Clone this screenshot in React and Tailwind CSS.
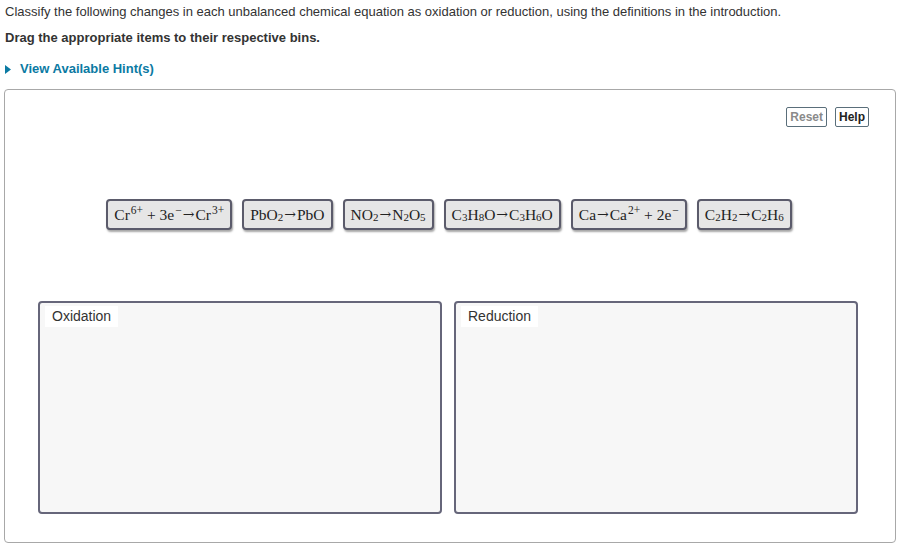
import React from "react";

const Chip = ({ children }) => (
  <div className="h-[31px] px-[6px] flex items-center rounded-[4px] border-2 border-[#5b5b6b] bg-[#e6e6e6] shadow-[1px_2px_2px_rgba(0,0,0,0.35)] text-[15.5px] text-[#222] whitespace-nowrap" style={{ fontFamily: '"Liberation Serif", "DejaVu Serif", serif' }}>
    {children}
  </div>
);

const Sup = ({ children }) => <sup className="text-[11.5px] top-[-0.35em] ml-[1px]">{children}</sup>;
const Sub = ({ children }) => <sub className="text-[11px]">{children}</sub>;
const Ar = () => <span className="mx-[1px] text-[14px]" style={{ fontFamily: '"DejaVu Serif", serif' }}>→</span>;

const Bin = ({ label }) => (
  <div className="w-[404px] h-[213px] rounded-[4px] border-2 border-[#66667a] bg-[#f7f7f7] pt-[1px] pl-[5px]">
    <div className="inline-block bg-white px-[7px] h-[21px] leading-[21px] text-[14px] text-[#333]">{label}</div>
  </div>
);

export default function App() {
  return (
    <div className="w-[897px] h-[544px] bg-white text-[#333]" style={{ fontFamily: '"Liberation Sans", Arial, sans-serif' }}>
      <div className="pl-[5px] pt-[4px] text-[13px] leading-[16px]">
        Classify the following changes in each unbalanced chemical equation as oxidation or reduction, using the definitions in the introduction.
      </div>
      <div className="pl-[5px] pt-[10px] text-[13px] leading-[16px] font-bold">
        Drag the appropriate items to their respective bins.
      </div>
      <div className="pl-[5px] pt-[15px] flex items-center text-[13px] leading-[16px] font-bold text-[#0b7aa3]">
        <svg width="6" height="9" viewBox="0 0 6 9" className="mr-[9px]"><polygon points="0,0 6,4.5 0,9" fill="#0b7aa3" /></svg>
        View Available Hint(s)
      </div>
      <div className="ml-[4px] mt-[12px] w-[892px] h-[454px] rounded-[4px] border border-[#a8a8a8] flex flex-col">
        <div className="flex justify-end gap-[8px] pr-[26px] pt-[17px]">
          <div className="h-[20px] px-[3px] border border-[#5a6e7a] rounded-[2px] text-[12px] leading-[18px] font-bold text-[#8a8a8a]">Reset</div>
          <div className="h-[20px] px-[3px] border border-[#5a6e7a] rounded-[2px] text-[12px] leading-[18px] font-bold text-[#222]">Help</div>
        </div>
        <div className="flex justify-center gap-[10px] mt-[72px] pr-[2px]">
          <Chip>Cr<Sup>6+</Sup>&nbsp;+ 3e<Sup>−</Sup><Ar />Cr<Sup>3+</Sup></Chip>
          <Chip>PbO<Sub>2</Sub><Ar />PbO</Chip>
          <Chip>NO<Sub>2</Sub><Ar />N<Sub>2</Sub>O<Sub>5</Sub></Chip>
          <Chip>C<Sub>3</Sub>H<Sub>8</Sub>O<Ar />C<Sub>3</Sub>H<Sub>6</Sub>O</Chip>
          <Chip>Ca<Ar />Ca<Sup>2+</Sup>&nbsp;+ 2e<Sup>−</Sup></Chip>
          <Chip>C<Sub>2</Sub>H<Sub>2</Sub><Ar />C<Sub>2</Sub>H<Sub>6</Sub></Chip>
        </div>
        <div className="flex gap-[12px] pl-[33px] mt-[71px]">
          <Bin label="Oxidation" />
          <Bin label="Reduction" />
        </div>
      </div>
    </div>
  );
}
